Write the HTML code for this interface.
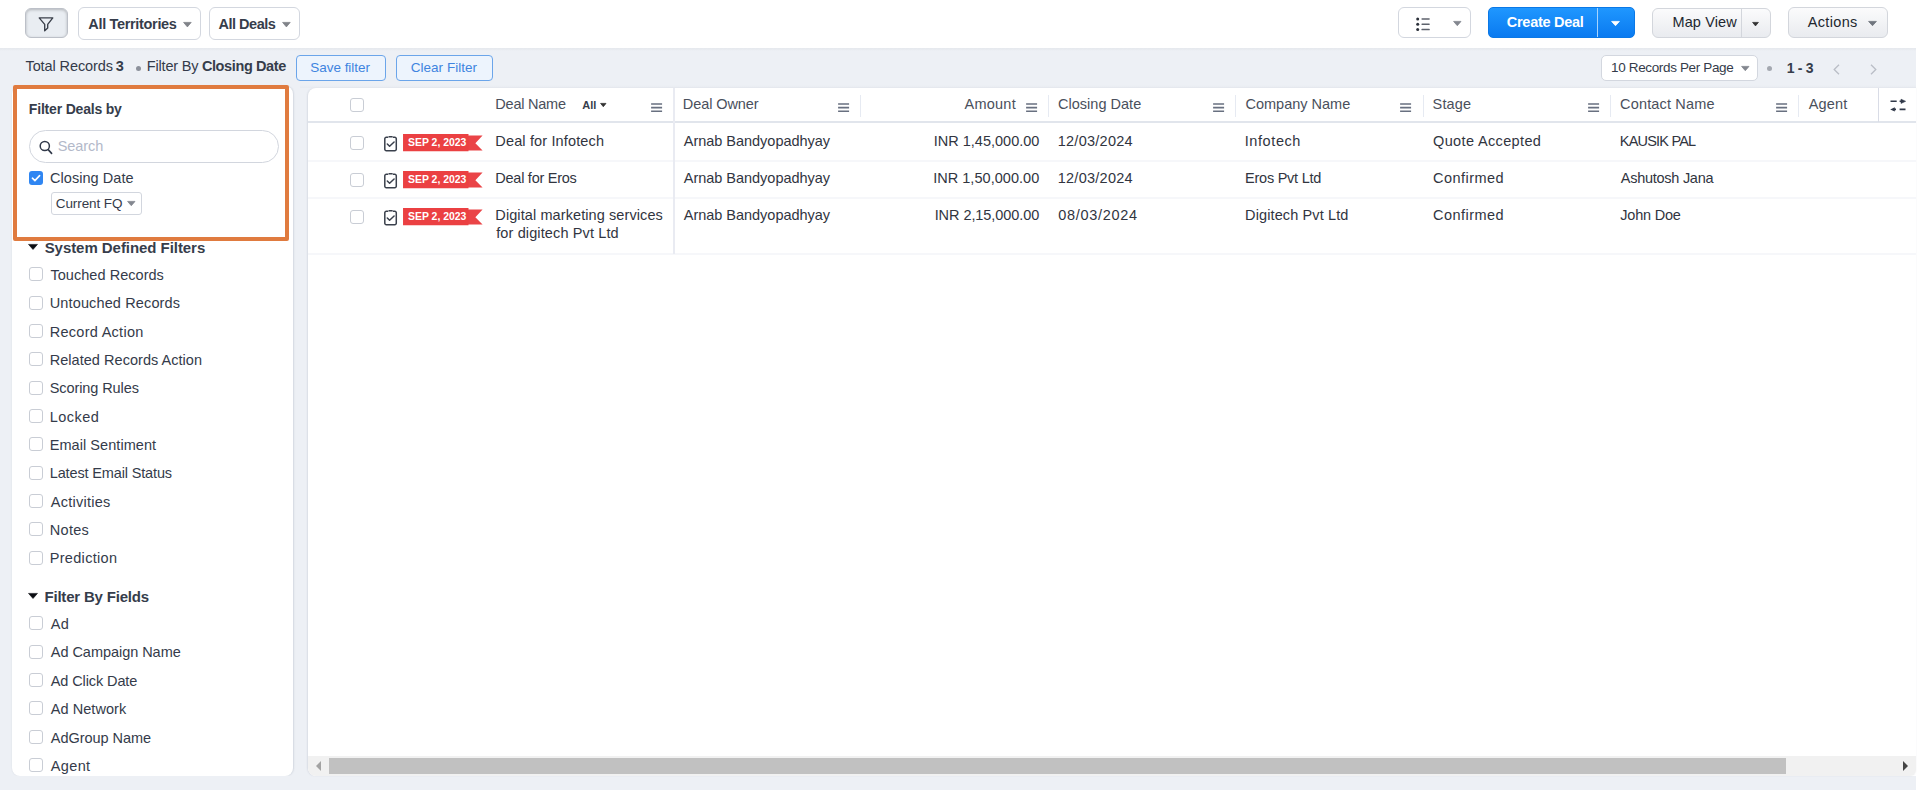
<!DOCTYPE html>
<html lang="en"><head><meta charset="utf-8"><title>Deals</title>
<style>
*{box-sizing:border-box;margin:0;padding:0}
html,body{width:1919px;height:790px;overflow:hidden}
body{background:#fff;font-family:"Liberation Sans",sans-serif;color:#343b4a;font-size:14.5px;position:relative}
.abs{position:absolute}
.t{position:absolute;white-space:nowrap;line-height:20px;height:20px}
.btn{position:absolute;border:1px solid #d3d7df;border-radius:6px;background:#fff}
.cb{position:absolute;width:14px;height:14px;border:1px solid #c9cdd5;border-radius:3px;background:#fff}
.sep{position:absolute;width:1px;background:#e6eaf2;top:95px;height:22px}
.rowline{position:absolute;left:308px;width:1608px;height:2px;background:#f6f7fa}
svg{position:absolute;overflow:visible}
</style></head><body>

<div class="abs" style="left:0;top:48px;width:1916px;height:742px;background:#edf0f5"></div>
<div class="abs" style="left:0;top:48px;width:1916px;height:3px;background:linear-gradient(#e5e8ed,#e9ecf1 60%,#edf0f5)"></div>
<div class="abs" style="left:300px;top:84.500px;width:1616px;height:3.500px;background:linear-gradient(#edf0f5,#e8ebf0)"></div>
<div class="btn" style="left:25px;top:8px;width:43px;height:30px;background:#e9edf2;border-color:#bcc0c8;box-shadow:inset 0 1px 3px rgba(0,0,0,.24)"></div>
<svg style="left:38px;top:17px" width="16" height="15" viewBox="0 0 16 15"><path d="M1.200 .9H14.800L9.700 7.400V10.900L6.700 13.700V7.400z" fill="none" stroke="#3a3f4a" stroke-width="1.350" stroke-linejoin="round"/></svg>
<div class="btn" style="left:78px;top:7px;width:123px;height:33px"></div>
<div class="t" id="allterr" style="left:88.35px;top:14.20px;font-size:14.5px;font-weight:700;color:#363d4b;letter-spacing:-0.334px">All Territories</div>
<svg style="left:183.3px;top:22.3px" width="8.8" height="5.2" viewBox="0 0 8.8 5.2"><path d="M.6 .4H8.200000000000001L4.4 4.9z" fill="#808389" stroke="#808389" stroke-width=".8" stroke-linejoin="round"/></svg>
<div class="btn" style="left:209px;top:7px;width:91px;height:33px"></div>
<div class="t" id="alldeals" style="left:218.48px;top:14.20px;font-size:14.5px;font-weight:700;color:#363d4b;letter-spacing:-0.478px">All Deals</div>
<svg style="left:282.3px;top:22.3px" width="8.8" height="5.2" viewBox="0 0 8.8 5.2"><path d="M.6 .4H8.200000000000001L4.4 4.9z" fill="#808389" stroke="#808389" stroke-width=".8" stroke-linejoin="round"/></svg>
<div class="btn" style="left:1398px;top:7px;width:73px;height:31px"></div>
<svg style="left:1416.2px;top:16.500px" width="14" height="15" viewBox="0 0 14 15"><g fill="#2b303a"><circle cx="1.700" cy="2" r="1.500"/><circle cx="1.700" cy="7.300" r="1.500"/><circle cx="1.700" cy="12.600" r="1.500"/></g><g fill="#5d626c"><rect x="5.400" y="1.250" width="8.400" height="1.500" rx=".7"/><rect x="5.400" y="6.550" width="8.400" height="1.500" rx=".7"/><rect x="5.400" y="11.850" width="8.400" height="1.500" rx=".7"/></g></svg>
<svg style="left:1453.3px;top:20.8px" width="8.6" height="5" viewBox="0 0 8.6 5"><path d="M.6 .4H8.0L4.3 4.7z" fill="#83878f" stroke="#83878f" stroke-width=".8" stroke-linejoin="round"/></svg>
<div class="abs" style="left:1488px;top:7px;width:147px;height:31px;border-radius:5px;background:linear-gradient(#1f97ff,#0a7af0);border:1px solid #0b78e6"></div>
<div class="abs" style="left:1597px;top:8px;width:1px;height:29px;background:#a6d4ff"></div>
<div class="t" id="create" style="left:1506.78px;top:12.10px;font-size:14.5px;font-weight:700;color:#fff;letter-spacing:-0.270px">Create Deal</div>
<svg style="left:1610.8px;top:21px" width="9" height="5" viewBox="0 0 9 5"><path d="M.6 .4H8.4L4.5 4.7z" fill="#fff" stroke="#fff" stroke-width=".8" stroke-linejoin="round"/></svg>
<div class="btn" style="left:1652px;top:8px;width:119px;height:30px;background:linear-gradient(#fbfbfc,#e9ebef);border-color:#d3d6dc"></div>
<div class="abs" style="left:1741px;top:9px;width:1px;height:28px;background:#d3d6dc"></div>
<div class="t" id="mapview" style="left:1672.50px;top:12.40px;font-size:14.5px;color:#22272f;letter-spacing:0.109px">Map View</div>
<svg style="left:1752px;top:21.8px" width="7" height="4.2" viewBox="0 0 7 4.2"><path d="M.6 .4H6.4L3.5 3.9000000000000004z" fill="#333" stroke="#333" stroke-width=".8" stroke-linejoin="round"/></svg>
<div class="btn" style="left:1788px;top:7px;width:100px;height:31px;background:linear-gradient(#fbfbfc,#e9ebef);border-color:#d3d6dc"></div>
<div class="t" id="actions" style="left:1807.73px;top:12.40px;font-size:14.5px;color:#22272f;letter-spacing:0.335px">Actions</div>
<svg style="left:1868px;top:21px" width="9" height="5" viewBox="0 0 9 5"><path d="M.6 .4H8.4L4.5 4.7z" fill="#70757e" stroke="#70757e" stroke-width=".8" stroke-linejoin="round"/></svg>
<div class="t" id="totrec" style="left:25.48px;top:56.30px;font-size:14.5px;letter-spacing:-0.091px">Total Records</div>
<div class="t" id="tot3" style="left:115.80px;top:56.30px;font-size:14.5px;font-weight:700;color:#363d4b">3</div>
<div class="abs" style="left:136px;top:66.3px;width:5px;height:5px;border-radius:50%;background:#8c919b"></div>
<div class="t" id="filtby" style="left:146.72px;top:56.30px;font-size:14.5px;letter-spacing:-0.161px">Filter By</div>
<div class="t" id="filtcd" style="left:201.89px;top:56.30px;font-size:14.5px;font-weight:700;color:#363d4b;letter-spacing:-0.383px">Closing Date</div>
<div class="btn" style="left:296px;top:55px;width:90px;height:26px;border-color:#6ba5ea;border-radius:4px;background:#edf4fd"></div>
<div class="t" id="savef" style="left:310.31px;top:57.75px;font-size:13.5px;color:#3f84e0;letter-spacing:-0.038px">Save filter</div>
<div class="btn" style="left:396px;top:55px;width:97px;height:26px;border-color:#6ba5ea;border-radius:4px;background:#edf4fd"></div>
<div class="t" id="clearf" style="left:410.72px;top:57.75px;font-size:13.5px;color:#3f84e0;letter-spacing:0.025px">Clear Filter</div>
<div class="btn" style="left:1601px;top:55px;width:157px;height:26px;border-radius:5px"></div>
<div class="t" id="rpp" style="left:1611.10px;top:57.90px;font-size:13.5px;letter-spacing:-0.359px">10 Records Per Page</div>
<svg style="left:1740.5px;top:66px" width="8.6" height="5" viewBox="0 0 8.6 5"><path d="M.6 .4H8.0L4.3 4.7z" fill="#83878f" stroke="#83878f" stroke-width=".8" stroke-linejoin="round"/></svg>
<div class="abs" style="left:1767px;top:65.8px;width:5px;height:5px;border-radius:50%;background:#a4a8b0"></div>
<div class="t" id="p13" style="left:1786.73px;top:58.10px;font-size:14px;font-weight:700;color:#363d4b;letter-spacing:-0.270px">1 - 3</div>
<svg style="left:1833px;top:64px" width="7" height="11" viewBox="0 0 7 11"><path d="M6 .7L1.2 5.5 6 10.3" fill="none" stroke="#b9bdc6" stroke-width="1.3"/></svg>
<svg style="left:1870px;top:64px" width="7" height="11" viewBox="0 0 7 11"><path d="M1 .7L5.8 5.5 1 10.3" fill="none" stroke="#b9bdc6" stroke-width="1.3"/></svg>
<div class="abs" style="left:12px;top:86px;width:281px;height:690px;background:#fff;border-radius:8px;box-shadow:.5px 0 1.500px rgba(90,100,125,.16)"></div>
<div class="abs" style="left:13px;top:85px;width:276px;height:156px;border:4px solid #e07b3f;border-radius:2px"></div>
<div class="t" id="fdb" style="left:28.86px;top:98.80px;font-size:14px;font-weight:700;color:#363d4b;letter-spacing:-0.191px">Filter Deals by</div>
<div class="abs" style="left:29px;top:130px;width:250px;height:33px;border:1px solid #d2d6de;border-radius:17px;background:#fff"></div>
<svg style="left:38.5px;top:139.5px" width="14" height="15" viewBox="0 0 14 15"><circle cx="5.8" cy="6" r="4.6" fill="none" stroke="#313949" stroke-width="1.5"/><path d="M9.2 9.6l3.4 3.8" stroke="#313949" stroke-width="1.6" stroke-linecap="round"/></svg>
<div class="t" id="search" style="left:57.72px;top:136.10px;font-size:14.5px;color:#b3b9c9;letter-spacing:-0.056px">Search</div>
<div class="abs" style="left:29px;top:170.6px;width:14px;height:14px;border-radius:3px;background:#2f86f2"></div>
<svg style="left:29px;top:170.6px" width="14" height="14" viewBox="0 0 14 14"><path d="M3.4 7.2l2.5 2.4 4.7-5" fill="none" stroke="#fff" stroke-width="1.6" stroke-linecap="round" stroke-linejoin="round"/></svg>
<div class="t" id="sbcd" style="left:49.97px;top:168.20px;font-size:14.5px;letter-spacing:0.054px">Closing Date</div>
<div class="btn" style="left:51px;top:192px;width:91px;height:23px;border-radius:3px;border-color:#d2d6de"></div>
<div class="t" id="curfq" style="left:55.81px;top:194.20px;font-size:13.5px;letter-spacing:-0.093px">Current FQ</div>
<svg style="left:127.3px;top:201.3px" width="8.6" height="5" viewBox="0 0 8.6 5"><path d="M.6 .4H8.0L4.3 4.7z" fill="#83878f" stroke="#83878f" stroke-width=".8" stroke-linejoin="round"/></svg>
<svg style="left:27.800px;top:244.3px" width="10" height="5.800" viewBox="0 0 10 5.800"><path d="M.5 .4H9.500L5 5.500z" fill="#0b0d12" stroke="#0b0d12" stroke-width=".6" stroke-linejoin="round"/></svg>
<div class="t" id="sdf" style="left:44.67px;top:238.30px;font-size:15px;font-weight:700;color:#363d4b;letter-spacing:-0.054px">System Defined Filters</div>
<div class="cb" style="left:29px;top:267px"></div>
<div class="t" id="s0" style="left:50.47px;top:265.10px;font-size:14.5px;letter-spacing:0.039px">Touched Records</div>
<div class="cb" style="left:29px;top:296px"></div>
<div class="t" id="s1" style="left:49.72px;top:293.43px;font-size:14.5px;letter-spacing:0.133px">Untouched Records</div>
<div class="cb" style="left:29px;top:324px"></div>
<div class="t" id="s2" style="left:49.72px;top:321.76px;font-size:14.5px;letter-spacing:0.278px">Record Action</div>
<div class="cb" style="left:29px;top:352px"></div>
<div class="t" id="s3" style="left:49.72px;top:350.09px;font-size:14.5px;letter-spacing:0.037px">Related Records Action</div>
<div class="cb" style="left:29px;top:381px"></div>
<div class="t" id="s4" style="left:49.72px;top:378.42px;font-size:14.5px;letter-spacing:-0.090px">Scoring Rules</div>
<div class="cb" style="left:29px;top:409px"></div>
<div class="t" id="s5" style="left:49.72px;top:406.75px;font-size:14.5px;letter-spacing:0.468px">Locked</div>
<div class="cb" style="left:29px;top:437px"></div>
<div class="t" id="s6" style="left:49.72px;top:435.08px;font-size:14.5px;letter-spacing:0.058px">Email Sentiment</div>
<div class="cb" style="left:29px;top:466px"></div>
<div class="t" id="s7" style="left:49.72px;top:463.41px;font-size:14.5px;letter-spacing:-0.141px">Latest Email Status</div>
<div class="cb" style="left:29px;top:494px"></div>
<div class="t" id="s8" style="left:50.80px;top:491.74px;font-size:14.5px;letter-spacing:0.254px">Activities</div>
<div class="cb" style="left:29px;top:522px"></div>
<div class="t" id="s9" style="left:49.72px;top:520.07px;font-size:14.5px;letter-spacing:0.315px">Notes</div>
<div class="cb" style="left:29px;top:551px"></div>
<div class="t" id="s10" style="left:49.72px;top:548.40px;font-size:14.5px;letter-spacing:0.317px">Prediction</div>
<svg style="left:27.800px;top:593.3px" width="10" height="5.800" viewBox="0 0 10 5.800"><path d="M.5 .4H9.500L5 5.500z" fill="#0b0d12" stroke="#0b0d12" stroke-width=".6" stroke-linejoin="round"/></svg>
<div class="t" id="fbf" style="left:44.45px;top:587.30px;font-size:15px;font-weight:700;color:#363d4b;letter-spacing:-0.192px">Filter By Fields</div>
<div class="cb" style="left:29px;top:616px"></div>
<div class="t" id="f0" style="left:50.80px;top:614.00px;font-size:14.5px;letter-spacing:0.270px">Ad</div>
<div class="cb" style="left:29px;top:645px"></div>
<div class="t" id="f1" style="left:50.80px;top:642.40px;font-size:14.5px;letter-spacing:-0.042px">Ad Campaign Name</div>
<div class="cb" style="left:29px;top:673px"></div>
<div class="t" id="f2" style="left:50.80px;top:670.80px;font-size:14.5px;letter-spacing:-0.106px">Ad Click Date</div>
<div class="cb" style="left:29px;top:701px"></div>
<div class="t" id="f3" style="left:50.80px;top:699.20px;font-size:14.5px;letter-spacing:0.055px">Ad Network</div>
<div class="cb" style="left:29px;top:730px"></div>
<div class="t" id="f4" style="left:50.80px;top:727.60px;font-size:14.5px;letter-spacing:-0.033px">AdGroup Name</div>
<div class="cb" style="left:29px;top:758px"></div>
<div class="t" id="f5" style="left:50.80px;top:756.00px;font-size:14.5px;letter-spacing:0.360px">Agent</div>
<div class="abs" style="left:0;top:776px;width:300px;height:14px;background:#edf0f5"></div>
<div class="abs" style="left:1906px;top:766px;width:10px;height:10px;background:#fff"></div>
<div class="abs" style="left:308px;top:88px;width:1608px;height:688px;background:#fff;border-radius:8px 0 6px 8px;box-shadow:-.5px 0 1.500px rgba(90,100,125,.13)"></div>
<div class="abs" style="left:308px;top:121.300px;width:1608px;height:2.200px;background:#e1e5ec"></div>
<div class="rowline" style="top:160px"></div>
<div class="rowline" style="top:197px"></div>
<div class="rowline" style="top:253px"></div>
<div class="abs" style="left:673.200px;top:88px;width:1.600px;height:166px;background:#e9ebf2"></div>
<div class="abs" style="left:1878px;top:88px;width:1px;height:34px;background:#d9dce6"></div>
<div class="sep" style="left:860px"></div>
<div class="sep" style="left:1048.2px"></div>
<div class="sep" style="left:1235.2px"></div>
<div class="sep" style="left:1423px"></div>
<div class="sep" style="left:1610.4px"></div>
<div class="sep" style="left:1798.2px"></div>
<div class="cb" style="left:350px;top:98px"></div>
<div class="t" id="h_dn" style="left:495.32px;top:94.30px;font-size:14.5px;color:#4a505c;letter-spacing:-0.228px">Deal Name</div>
<div class="t" id="h_all" style="left:582.22px;top:95.00px;font-size:11px;font-weight:700;color:#363d4b">All</div>
<svg style="left:600.2px;top:102.8px" width="6.6" height="4" viewBox="0 0 6.6 4"><path d="M.6 .4H6.0L3.3 3.7z" fill="#333" stroke="#333" stroke-width=".8" stroke-linejoin="round"/></svg>
<svg style="left:650.8px;top:103.2px" width="11.2" height="9.2" viewBox="0 0 11.2 9.2"><path d="M.1 .95h11M.1 4.600h11M.1 8.250h11" stroke="#687080" stroke-width="1.600"/></svg>
<div class="t" id="h_do" style="left:682.86px;top:94.30px;font-size:14.5px;color:#4a505c;letter-spacing:-0.087px">Deal Owner</div>
<svg style="left:838px;top:103.2px" width="11.2" height="9.2" viewBox="0 0 11.2 9.2"><path d="M.1 .95h11M.1 4.600h11M.1 8.250h11" stroke="#687080" stroke-width="1.600"/></svg>
<div class="t" id="h_am" style="left:964.60px;top:94.30px;font-size:14.5px;color:#4a505c;letter-spacing:0.223px">Amount</div>
<svg style="left:1025.6px;top:103.2px" width="11.2" height="9.2" viewBox="0 0 11.2 9.2"><path d="M.1 .95h11M.1 4.600h11M.1 8.250h11" stroke="#687080" stroke-width="1.600"/></svg>
<div class="t" id="h_cd" style="left:1058.09px;top:94.30px;font-size:14.5px;color:#4a505c;letter-spacing:0.009px">Closing Date</div>
<svg style="left:1213px;top:103.2px" width="11.2" height="9.2" viewBox="0 0 11.2 9.2"><path d="M.1 .95h11M.1 4.600h11M.1 8.250h11" stroke="#687080" stroke-width="1.600"/></svg>
<div class="t" id="h_cn" style="left:1245.48px;top:94.30px;font-size:14.5px;color:#4a505c">Company Name</div>
<svg style="left:1400.3px;top:103.2px" width="11.2" height="9.2" viewBox="0 0 11.2 9.2"><path d="M.1 .95h11M.1 4.600h11M.1 8.250h11" stroke="#687080" stroke-width="1.600"/></svg>
<div class="t" id="h_st" style="left:1432.54px;top:94.30px;font-size:14.5px;color:#4a505c;letter-spacing:0.177px">Stage</div>
<svg style="left:1587.8px;top:103.2px" width="11.2" height="9.2" viewBox="0 0 11.2 9.2"><path d="M.1 .95h11M.1 4.600h11M.1 8.250h11" stroke="#687080" stroke-width="1.600"/></svg>
<div class="t" id="h_ct" style="left:1620.09px;top:94.30px;font-size:14.5px;color:#4a505c;letter-spacing:0.155px">Contact Name</div>
<svg style="left:1775.8px;top:103.2px" width="11.2" height="9.2" viewBox="0 0 11.2 9.2"><path d="M.1 .95h11M.1 4.600h11M.1 8.250h11" stroke="#687080" stroke-width="1.600"/></svg>
<div class="t" id="h_ag" style="left:1808.74px;top:94.30px;font-size:14.5px;color:#4a505c;letter-spacing:0.194px">Agent</div>
<svg style="left:1890px;top:98px" width="16" height="14" viewBox="0 0 16 14"><g stroke="#313949" stroke-width="1.600" fill="none"><path d="M.5 3.300h6.200M9.600 3.300h2.400M4 11.400h2M9.600 11.400h5.900"/></g><path d="M11 1.200L15.600 3.300 11 5.400z" fill="#313949" stroke="#313949" stroke-width=".6" stroke-linejoin="round"/><path d="M4.800 9.300L.2 11.400 4.800 13.500z" fill="#313949"/></svg>
<div class="cb" style="left:350px;top:136.3px"></div>
<svg style="left:383.8px;top:135.5px" width="13.2" height="15.6" viewBox="0 0 13.2 15.6"><path d="M4.300 1.300H2.300a1.500 1.500 0 0 0-1.500 1.500v10.400a1.500 1.500 0 0 0 1.500 1.500h8.500a1.500 1.500 0 0 0 1.500-1.500V2.800a1.500 1.500 0 0 0-1.500-1.500H8.800" fill="none" stroke="#3a404c" stroke-width="1.500"/><path d="M5.100 .7h3" stroke="#3a404c" stroke-width="1.400" stroke-linecap="round"/><path d="M3.300 8l2.300 2.300 4.500-4.300" fill="none" stroke="#3a404c" stroke-width="1.500" stroke-linecap="round" stroke-linejoin="round"/></svg>
<svg style="left:403px;top:133.9px" width="80" height="17.200" viewBox="0 0 80 17.200"><path d="M64 1.400H79.600L72.400 9.200 79.600 16.600H64z" fill="#ea4447"/><path d="M0 0H65.500V17.200H0z" fill="#eb4042"/><text id="flag0" x="5" y="11.900" font-family="Liberation Sans, sans-serif" font-size="10.900" font-weight="700" fill="#fff" textLength="58.400" lengthAdjust="spacingAndGlyphs">SEP 2, 2023</text></svg>
<div class="t" id="r0n" style="left:495.32px;top:131.40px;font-size:14.5px;color:#31353f;letter-spacing:0.145px">Deal for Infotech</div>
<div class="t" id="r0o" style="left:683.77px;top:131.40px;font-size:14.5px;color:#31353f;letter-spacing:-0.024px">Arnab Bandyopadhyay</div>
<div class="t" id="r0a" style="left:933.76px;top:131.40px;font-size:14.5px;color:#31353f">INR 1,45,000.00</div>
<div class="t" id="r0d" style="left:1057.66px;top:131.40px;font-size:14.5px;color:#31353f;letter-spacing:0.271px">12/03/2024</div>
<div class="t" id="r0c" style="left:1244.76px;top:131.40px;font-size:14.5px;color:#31353f;letter-spacing:0.584px">Infotech</div>
<div class="t" id="r0s" style="left:1433.03px;top:131.40px;font-size:14.5px;color:#31353f;letter-spacing:0.362px">Quote Accepted</div>
<div class="t" id="r0t" style="left:1619.86px;top:131.40px;font-size:14.5px;color:#31353f;letter-spacing:-0.807px">KAUSIK PAL</div>
<div class="cb" style="left:350px;top:173.3px"></div>
<svg style="left:383.8px;top:172.5px" width="13.2" height="15.6" viewBox="0 0 13.2 15.6"><path d="M4.300 1.300H2.300a1.500 1.500 0 0 0-1.500 1.500v10.400a1.500 1.500 0 0 0 1.500 1.500h8.500a1.500 1.500 0 0 0 1.500-1.500V2.800a1.500 1.500 0 0 0-1.500-1.500H8.800" fill="none" stroke="#3a404c" stroke-width="1.500"/><path d="M5.100 .7h3" stroke="#3a404c" stroke-width="1.400" stroke-linecap="round"/><path d="M3.300 8l2.300 2.300 4.500-4.300" fill="none" stroke="#3a404c" stroke-width="1.500" stroke-linecap="round" stroke-linejoin="round"/></svg>
<svg style="left:403px;top:170.9px" width="80" height="17.200" viewBox="0 0 80 17.200"><path d="M64 1.400H79.600L72.400 9.200 79.600 16.600H64z" fill="#ea4447"/><path d="M0 0H65.500V17.200H0z" fill="#eb4042"/><text id="flag1" x="5" y="11.900" font-family="Liberation Sans, sans-serif" font-size="10.900" font-weight="700" fill="#fff" textLength="58.400" lengthAdjust="spacingAndGlyphs">SEP 2, 2023</text></svg>
<div class="t" id="r1n" style="left:495.32px;top:168.40px;font-size:14.5px;color:#31353f;letter-spacing:-0.259px">Deal for Eros</div>
<div class="t" id="r1o" style="left:683.77px;top:168.40px;font-size:14.5px;color:#31353f;letter-spacing:-0.024px">Arnab Bandyopadhyay</div>
<div class="t" id="r1a" style="left:933.15px;top:168.40px;font-size:14.5px;color:#31353f;letter-spacing:0.034px">INR 1,50,000.00</div>
<div class="t" id="r1d" style="left:1057.66px;top:168.40px;font-size:14.5px;color:#31353f;letter-spacing:0.271px">12/03/2024</div>
<div class="t" id="r1c" style="left:1245.09px;top:168.40px;font-size:14.5px;color:#31353f;letter-spacing:-0.246px">Eros Pvt Ltd</div>
<div class="t" id="r1s" style="left:1433.00px;top:168.40px;font-size:14.5px;color:#31353f;letter-spacing:0.456px">Confirmed</div>
<div class="t" id="r1t" style="left:1620.77px;top:168.40px;font-size:14.5px;color:#31353f;letter-spacing:-0.263px">Ashutosh Jana</div>
<div class="cb" style="left:350px;top:210.3px"></div>
<svg style="left:383.8px;top:209.5px" width="13.2" height="15.6" viewBox="0 0 13.2 15.6"><path d="M4.300 1.300H2.300a1.500 1.500 0 0 0-1.500 1.500v10.400a1.500 1.500 0 0 0 1.500 1.500h8.500a1.500 1.500 0 0 0 1.500-1.500V2.800a1.500 1.500 0 0 0-1.500-1.500H8.800" fill="none" stroke="#3a404c" stroke-width="1.500"/><path d="M5.100 .7h3" stroke="#3a404c" stroke-width="1.400" stroke-linecap="round"/><path d="M3.300 8l2.300 2.300 4.500-4.300" fill="none" stroke="#3a404c" stroke-width="1.500" stroke-linecap="round" stroke-linejoin="round"/></svg>
<svg style="left:403px;top:207.9px" width="80" height="17.200" viewBox="0 0 80 17.200"><path d="M64 1.400H79.600L72.400 9.200 79.600 16.600H64z" fill="#ea4447"/><path d="M0 0H65.500V17.200H0z" fill="#eb4042"/><text id="flag2" x="5" y="11.900" font-family="Liberation Sans, sans-serif" font-size="10.900" font-weight="700" fill="#fff" textLength="58.400" lengthAdjust="spacingAndGlyphs">SEP 2, 2023</text></svg>
<div class="t" id="r2n" style="left:495.32px;top:205.40px;font-size:14.5px;color:#31353f;letter-spacing:0.094px">Digital marketing services</div>
<div class="t" id="r2n2" style="left:496.19px;top:222.90px;font-size:14.5px;color:#31353f;letter-spacing:0.124px">for digitech Pvt Ltd</div>
<div class="t" id="r2o" style="left:683.77px;top:205.40px;font-size:14.5px;color:#31353f;letter-spacing:-0.024px">Arnab Bandyopadhyay</div>
<div class="t" id="r2a" style="left:934.65px;top:205.40px;font-size:14.5px;color:#31353f;letter-spacing:-0.062px">INR 2,15,000.00</div>
<div class="t" id="r2d" style="left:1058.31px;top:205.40px;font-size:14.5px;color:#31353f;letter-spacing:0.690px">08/03/2024</div>
<div class="t" id="r2c" style="left:1245.09px;top:205.40px;font-size:14.5px;color:#31353f;letter-spacing:0.120px">Digitech Pvt Ltd</div>
<div class="t" id="r2s" style="left:1433.00px;top:205.40px;font-size:14.5px;color:#31353f;letter-spacing:0.456px">Confirmed</div>
<div class="t" id="r2t" style="left:1620.34px;top:205.40px;font-size:14.5px;color:#31353f;letter-spacing:-0.221px">John Doe</div>
<div class="abs" style="left:308px;top:756px;width:1608px;height:20px;background:#f1f1f1;border-radius:0 0 6px 8px"></div>
<div class="abs" style="left:328.500px;top:757.500px;width:1457.500px;height:16.500px;background:#c1c1c1"></div>
<svg style="left:316px;top:761px" width="5" height="10" viewBox="0 0 5 10"><path d="M5 0V10L0 5z" fill="#a3a3a3"/></svg>
<svg style="left:1903px;top:761px" width="5" height="10" viewBox="0 0 5 10"><path d="M0 0V10L5 5z" fill="#454545"/></svg>
</body></html>
